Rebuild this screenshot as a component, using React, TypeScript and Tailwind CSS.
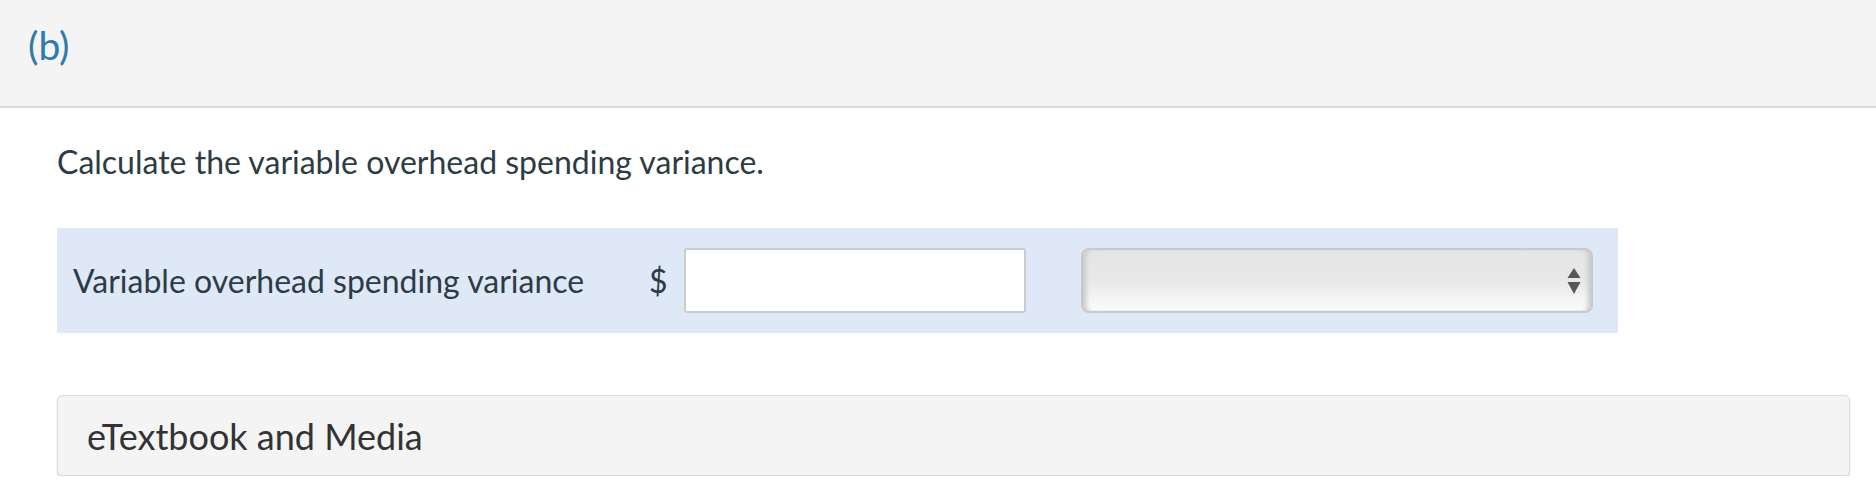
import React from "react";

const font = { fontFamily: "Lato, 'Noto Sans', sans-serif" };

function SelectArrows() {
  return (
    <svg width="14" height="28" viewBox="0 0 14 28" className="block">
      <polygon points="7,1 13.5,11 0.5,11" fill="#575757" />
      <polygon points="0.5,15 13.5,15 7,27" fill="#575757" />
    </svg>
  );
}

export default function App() {
  return (
    <div className="w-full bg-white text-[#2d3b45]" style={font}>
      <div className="h-[108px] bg-[#f4f4f4] border-b-2 border-[#dadada] pl-[28px] pt-[20px]">
        <span className="text-[39px] leading-[50px] text-[#2e7ab0]">(b)</span>
      </div>
      <div className="pl-[57px] pr-[26px]">
        <p className="pt-[34px] text-[32px] leading-[40px]">Calculate the variable overhead spending variance.</p>
        <div className="mt-[46px] w-[1561px] h-[105px] bg-[#dfe8f7] flex items-center pl-[16px]">
          <span className="w-[576px] text-[32px] leading-[40px]">Variable overhead spending variance</span>
          <span className="w-[35px] text-[32px] leading-[40px]">$</span>
          <div className="w-[342px] h-[65px] bg-white border-2 border-[#cbcbcb] rounded-[3px]" />
          <div className="ml-[55px] w-[512px] h-[65px] rounded-[8px] border-2 border-[#c9c9c9] bg-gradient-to-b from-[#e5e5e5] via-[#e8e8e8] to-[#fcfcfc] shadow-[inset_6px_0_5px_-3px_#c8c8c8,inset_-6px_0_5px_-3px_#c8c8c8] flex items-center justify-end pr-[10px]">
            <SelectArrows />
          </div>
        </div>
        <div className="mt-[62px] h-[81px] rounded-[5px] border border-[#dcdcdc] bg-[#f4f4f4] shadow-[0_2px_2px_#dcdcdc] flex items-center pl-[29px]">
          <span className="text-[36px] text-[#333]">eTextbook and Media</span>
        </div>
      </div>
    </div>
  );
}
